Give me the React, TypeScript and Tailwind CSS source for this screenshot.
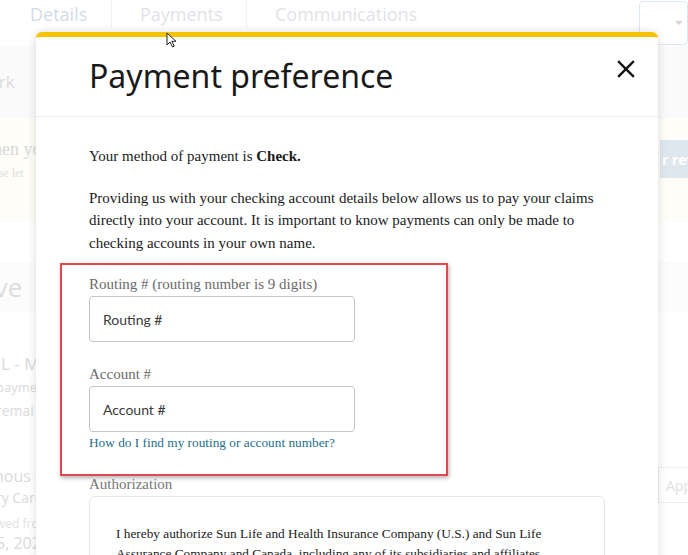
import React from "react";

const serif = { fontFamily: '"Liberation Serif", "Times New Roman", serif' };

const BackgroundPage: React.FC = () => (
  <div className="w-[688px] h-[555px] bg-white" style={{ fontFamily: '"Open Sans", Arial, sans-serif' }}>
    {/* tabs row */}
    <div className="flex items-start h-[46px]">
      <div className="flex h-[29px] items-center text-[18px] text-[#dfe3e8]">
        <div className="w-[112px] pl-[30px] text-[#d3dce6] border-r border-[#eef0f2]">Details</div>
        <div className="w-[135px] pl-[28px] border-r border-[#eef0f2]">Payments</div>
        <div className="pl-[28px]">Communications</div>
      </div>
      <div className="ml-auto mt-[1px] w-[49px] h-[44px] border border-[#dbe6f1] rounded-sm flex items-center justify-end pr-[4px]">
        <div className="w-0 h-0 border-l-[4px] border-r-[4px] border-t-[4px] border-l-transparent border-r-transparent border-t-[#d6d6d6]" />
      </div>
    </div>
    {/* section "Mark" */}
    <div className="h-[72px] bg-[#fafafa] flex items-center overflow-hidden">
      <span className="-ml-[26px] text-[17px] text-[#dadada]">Mark</span>
    </div>
    {/* notice band */}
    <div className="h-[104px] bg-[#fffdf8] flex">
      <div className="pt-[18px] overflow-hidden" style={serif}>
        <div className="-ml-[24px] text-[18px] text-[#d8d8d8] whitespace-nowrap">When you</div>
        <div className="-ml-[22px] text-[12px] text-[#e0e0e0] whitespace-nowrap mt-[1px]">Please let</div>
      </div>
      <div className="ml-auto mt-[22px] w-[28px] h-[38px] bg-[#dfe7ee] text-white font-bold text-[14px] flex items-center overflow-hidden whitespace-nowrap pl-[2px]">
        r return
      </div>
    </div>
    <div className="h-[40px] bg-white" />
    {/* Active section */}
    <div className="h-[50px] bg-[#fcfcfc] flex items-center overflow-hidden">
      <span className="-ml-[50px] text-[26px] text-[#dcdcdc]">Active</span>
    </div>
    <div className="flex">
      <div className="flex flex-col text-[#dadada] overflow-hidden pt-[40px] w-[36px]">
        <span className="ml-[1px] text-[17px] leading-[24px] whitespace-nowrap">L - Mi</span>
        <span className="-ml-[4px] text-[13px] leading-[22px] whitespace-nowrap">payme</span>
        <span className="-ml-[4px] text-[14px] leading-[26px] whitespace-nowrap">remai</span>
        <div className="h-[41px]" />
        <span className="-ml-[6px] text-[16px] leading-[22px] whitespace-nowrap">nous t</span>
        <span className="-ml-[4px] text-[14px] leading-[22px] whitespace-nowrap">ry Care</span>
        <div className="h-[5px]" />
        <span className="-ml-[4px] text-[12px] leading-[20px] whitespace-nowrap text-[#e2e2e2]">wed fro</span>
        <span className="-ml-[4px] text-[16px] leading-[18px] whitespace-nowrap">5, 202</span>
      </div>
      <div className="ml-auto pt-[155px]">
        <div className="w-[30px] h-[36px] border-y border-l border-[#f0f0f0] flex items-center overflow-hidden pl-[7px] text-[14px] text-[#e0e0e0] whitespace-nowrap">
          Apply
        </div>
      </div>
    </div>
  </div>
);

const CloseIcon: React.FC = () => (
  <svg width="18" height="18" viewBox="0 0 18 18" fill="none" stroke="#111" strokeWidth="2.4" strokeLinecap="square">
    <line x1="2" y1="2" x2="16" y2="16" />
    <line x1="16" y1="2" x2="2" y2="16" />
  </svg>
);

const Cursor: React.FC = () => (
  <svg width="11" height="16" viewBox="0 0 11 16">
    <path d="M1 1 L1 13 L4 10 L6.5 15 L8.3 14.2 L5.8 9.3 L10 9.3 Z" fill="#fff" stroke="#222" strokeWidth="1" strokeLinejoin="round" />
  </svg>
);

const FieldInput: React.FC<{ placeholder: string }> = ({ placeholder }) => (
  <input
    className="w-[266px] h-[46px] border border-[#c4c4c4] rounded-[4px] px-[13px] text-[14px] text-[#333] placeholder:text-[#3a3a3a] outline-none"
    style={{ fontFamily: 'Lato, "Open Sans", Arial, sans-serif' }}
    placeholder={placeholder}
  />
);

const PaymentModal: React.FC = () => (
  <div className="absolute left-[36px] top-[32px] w-[622px] h-[560px] bg-white border-t-[5px] border-[#f5c400] rounded-t-[6px] shadow-[0_0_10px_rgba(0,0,0,0.14)]">
    <div className="h-[80px] border-b border-[#ececec] flex items-center pl-[53px] pr-[22px]">
      <h1 className="text-[32px] text-[#1a1a1a] leading-none pb-[2px]" style={{ fontFamily: '"Noto Sans", "Open Sans", sans-serif' }}>
        Payment preference
      </h1>
      <button className="ml-auto mb-[16px] mr-[1px]">
        <CloseIcon />
      </button>
    </div>
    <div className="pl-[53px] pr-[53px] pt-[28px] text-[15px] leading-[22.5px] text-[#1a1a1a]" style={serif}>
      <p>
        Your method of payment is <b>Check.</b>
      </p>
      <p className="mt-[19px]">
        Providing us with your checking account details below allows us to pay your claims directly into your account. It is
        important to know payments can only be made to checking accounts in your own name.
      </p>
      <div className="mt-[9px] -ml-[29px] w-[388px] h-[213px] border-2 border-[#e0484b] shadow-[1px_2px_4px_rgba(0,0,0,0.3)] pl-[27px] pt-[8px]">
        <label className="block text-[#6b6b6b] leading-[22px]">Routing # (routing number is 9 digits)</label>
        <div className="mt-[1px]">
          <FieldInput placeholder="Routing #" />
        </div>
        <label className="block text-[#6b6b6b] leading-[22px] mt-[21px]">Account #</label>
        <div className="mt-[1px]">
          <FieldInput placeholder="Account #" />
        </div>
        <a className="block text-[13.3px] text-[#1f6f8b] leading-[20px] mt-[1px]" href="#">
          How do I find my routing or account number?
        </a>
      </div>
      <div className="text-[#777] leading-[20px] mt-[-2px]">Authorization</div>
      <div className="mt-[2px] w-full border border-[#e6e6e6] rounded-[6px] pt-[27px] pl-[26px] pr-[40px] text-[13.3px] leading-[20px] text-[#222]">
        I hereby authorize Sun Life and Health Insurance Company (U.S.) and Sun Life Assurance Company and Canada, including any of
        its subsidiaries and affiliates
      </div>
    </div>
  </div>
);

export default function App() {
  return (
    <div className="relative w-[688px] h-[555px] overflow-hidden">
      <BackgroundPage />
      <PaymentModal />
      <div className="absolute left-[166px] top-[32px]">
        <Cursor />
      </div>
    </div>
  );
}
